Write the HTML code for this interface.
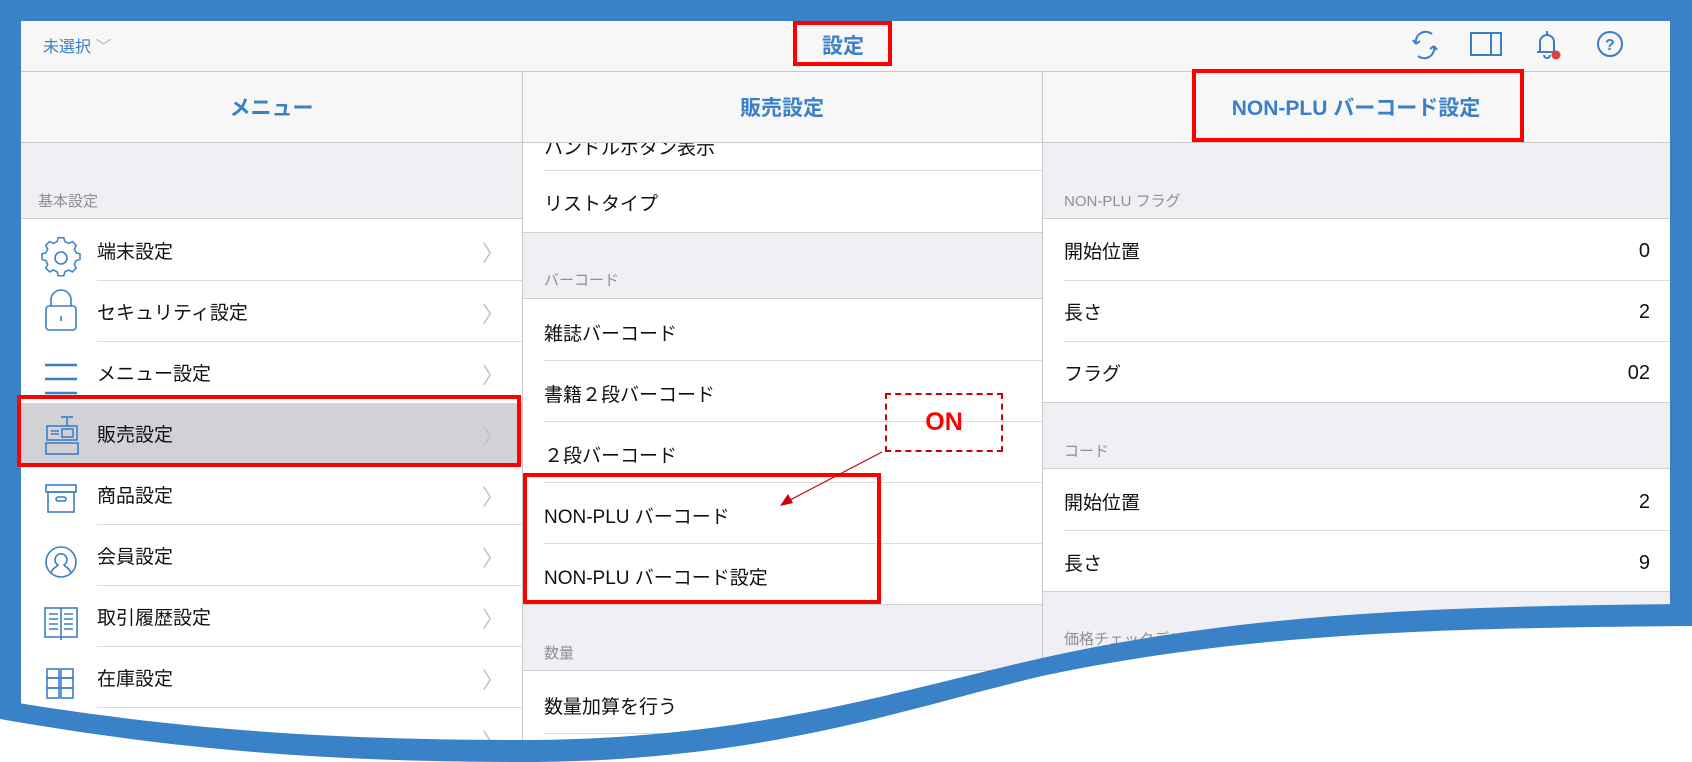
<!DOCTYPE html>
<html><head><meta charset="utf-8"><style>
*{margin:0;padding:0;box-sizing:border-box}
body{width:1692px;height:762px;overflow:hidden;background:#3a82c8;font-family:"Liberation Sans","Noto Sans CJK JP",sans-serif;position:relative}
.panel{position:absolute;left:21px;top:21px;width:1649px;height:741px;background:#fff;overflow:hidden}
.w{position:absolute;left:-21px;top:-21px;width:1692px;height:762px}
.abs{position:absolute}
.hdr{top:72px;height:71px;background:#f7f7f7;border-bottom:1px solid #c8c8c8;color:#3a7fc8;font-weight:bold;font-size:21px;display:flex;align-items:center;justify-content:center}
.gray{background:#efeff4}
.lbl{color:#8e8e93;font-size:15px}
.row{font-size:19px;color:#111}
.val{font-size:20px;color:#111;left:1500px;width:150px;text-align:right}
.ln{height:1px;background:#dcdcdc}
.chev{color:#c2c2c6;font-size:22px}
.red{position:absolute;border:4px solid #f00}
</style></head><body>
<div class="panel"><div class="w">
<div class="abs" style="left:0;top:0;width:1692px;height:72px;background:#f7f7f7;border-bottom:1px solid #c8c8c8"></div>
<div class="abs" style="left:43px;top:33px;color:#3a7fc8;font-size:16px">未選択 <span style="color:#a9b9cc">﹀</span></div>
<div class="abs" style="left:822px;top:30px;color:#3a7fc8;font-size:21px;font-weight:bold">設定</div>
<svg class="abs" style="left:1405px;top:28px" width="240" height="32" fill="none" stroke="#3a7fc8" stroke-width="2">
<path d="M27 6a10 10 0 0 0-16 10M13 28a10 10 0 0 0 16-10M11 16l-3-4M11 16l4-3M29 18l3 4M29 18l-4 3"/>
<rect x="66" y="5" width="30" height="22"/><line x1="86" y1="5" x2="86" y2="27"/>
<path d="M135 24v-10a7 7 0 0 1 14 0v10h3h-20zM142 3v4M139 27a3 3 0 0 0 6 0"/>
<circle cx="151" cy="27" r="4.5" fill="#e0403a" stroke="none"/>
<circle cx="205" cy="16" r="12"/><text x="200" y="22" font-size="16" font-weight="bold" fill="#3a7fc8" stroke="none" font-family="Liberation Sans">?</text>
</svg>

<div class="abs row" style="left:544px;top:133px">ハンドルボタン表示</div>
<div class="abs ln" style="left:544px;top:170px;width:498px"></div>
<div class="abs row" style="left:544px;top:189px">リストタイプ</div>
<div class="abs gray" style="left:522px;top:232px;width:520px;height:67px;border-top:1px solid #d0d0d0;border-bottom:1px solid #d0d0d0"></div>
<div class="abs lbl" style="left:544px;top:269px">バーコード</div>
<div class="abs row" style="left:544px;top:319px">雑誌バーコード</div>
<div class="abs ln" style="left:544px;top:360px;width:498px"></div>
<div class="abs row" style="left:544px;top:380px">書籍２段バーコード</div>
<div class="abs ln" style="left:544px;top:421px;width:498px"></div>
<div class="abs row" style="left:544px;top:441px">２段バーコード</div>
<div class="abs ln" style="left:544px;top:482px;width:498px"></div>
<div class="abs row" style="left:544px;top:502px">NON-PLU バーコード</div>
<div class="abs ln" style="left:544px;top:543px;width:498px"></div>
<div class="abs row" style="left:544px;top:563px">NON-PLU バーコード設定</div>
<div class="abs gray" style="left:522px;top:604px;width:520px;height:67px;border-top:1px solid #d0d0d0;border-bottom:1px solid #d0d0d0"></div>
<div class="abs lbl" style="left:544px;top:642px">数量</div>
<div class="abs row" style="left:544px;top:692px">数量加算を行う</div>
<div class="abs ln" style="left:544px;top:733px;width:498px"></div>

<div class="abs hdr" style="left:21px;width:501px">メニュー</div>
<div class="abs hdr" style="left:522px;width:520px">販売設定</div>
<div class="abs hdr" style="left:1042px;width:650px;padding-right:22px">NON-PLU バーコード設定</div>

<div class="abs gray" style="left:0;top:143px;width:522px;height:76px;border-bottom:1px solid #d0d0d0"></div>
<div class="abs lbl" style="left:38px;top:190px">基本設定</div>
<div class="abs" style="left:21px;top:403px;width:501px;height:61px;background:#d1d1d6"></div>
<svg class="abs" style="left:39px;top:227px" width="44" height="560" fill="none" stroke="#3a7fc8" stroke-width="1.6">
<g transform="translate(22,31)"><circle r="6"/><path d="M-3 -14h6l1 4 4 2 4-2 4 4-2 4 2 4 4 1v6l-4 1-2 4 2 4-4 4-4-2-4 2-1 4h-6l-1-4-4-2-4 2-4-4 2-4-2-4-4-1v-6l4-1 2-4-2-4 4-4 4 2 4-2z" transform="translate(0,-7) scale(0.95)"/></g>
<g transform="translate(0,61)"><rect x="7" y="18" width="30" height="24" rx="3"/><path d="M12 18v-6a10 10 0 0 1 20 0v6"/><line x1="22" y1="28" x2="22" y2="33"/></g>
<g transform="translate(0,122)" stroke-width="2.5"><line x1="6" y1="16" x2="38" y2="16"/><line x1="6" y1="30" x2="38" y2="30"/><line x1="6" y1="44" x2="38" y2="44"/></g>
<g transform="translate(0,183)"><rect x="8" y="16" width="30" height="14"/><rect x="7" y="33" width="32" height="11"/><rect x="23" y="19" width="11" height="8"/><line x1="28" y1="8" x2="28" y2="16"/><line x1="22" y1="7" x2="34" y2="7"/><path d="M12 21h8M12 24h8"/></g>
<g transform="translate(0,244)"><rect x="7" y="14" width="30" height="7"/><rect x="9" y="21" width="26" height="20"/><rect x="17" y="26" width="10" height="4" rx="2"/></g>
<g transform="translate(0,305)"><circle cx="22" cy="30" r="15"/><path d="M12 41c2-6 6-6 7-8a6 6 0 1 1 6 0c1 2 5 2 7 8"/></g>
<g transform="translate(0,366)"><rect x="6" y="15" width="32" height="29"/><line x1="22" y1="15" x2="22" y2="47"/><path d="M10 21h9M10 26h9M10 31h9M10 36h9M25 21h9M25 26h9M25 31h9M25 36h9"/></g>
<g transform="translate(0,427)"><rect x="8" y="15" width="12" height="9"/><rect x="22" y="15" width="12" height="9"/><rect x="8" y="24" width="12" height="10"/><rect x="22" y="24" width="12" height="10"/><rect x="8" y="34" width="12" height="10"/><rect x="22" y="34" width="12" height="10"/></g>
</svg>
<div class="abs row" style="left:97px;top:237px">端末設定</div>
<div class="abs row" style="left:97px;top:298px">セキュリティ設定</div>
<div class="abs row" style="left:97px;top:359px">メニュー設定</div>
<div class="abs row" style="left:97px;top:420px">販売設定</div>
<div class="abs row" style="left:97px;top:481px">商品設定</div>
<div class="abs row" style="left:97px;top:542px">会員設定</div>
<div class="abs row" style="left:97px;top:603px">取引履歴設定</div>
<div class="abs row" style="left:97px;top:664px">在庫設定</div>
<div class="abs ln" style="left:97px;top:280px;width:425px"></div>
<div class="abs ln" style="left:97px;top:341px;width:425px"></div>
<div class="abs ln" style="left:97px;top:524px;width:425px"></div>
<div class="abs ln" style="left:97px;top:585px;width:425px"></div>
<div class="abs ln" style="left:97px;top:646px;width:425px"></div>
<div class="abs ln" style="left:97px;top:707px;width:425px"></div>
<div class="abs chev" style="left:482px;top:236px">〉</div>
<div class="abs chev" style="left:482px;top:297px">〉</div>
<div class="abs chev" style="left:482px;top:358px">〉</div>
<div class="abs chev" style="left:482px;top:419px">〉</div>
<div class="abs chev" style="left:482px;top:480px">〉</div>
<div class="abs chev" style="left:482px;top:541px">〉</div>
<div class="abs chev" style="left:482px;top:602px">〉</div>
<div class="abs chev" style="left:482px;top:663px">〉</div>
<div class="abs chev" style="left:482px;top:724px">〉</div>

<div class="abs" style="left:522px;top:72px;width:1px;height:700px;background:#c8c8c8"></div>
<div class="abs" style="left:1042px;top:72px;width:1px;height:700px;background:#c8c8c8"></div>

<div class="abs gray" style="left:1043px;top:143px;width:650px;height:76px;border-bottom:1px solid #d0d0d0"></div>
<div class="abs lbl" style="left:1064px;top:190px">NON-PLU フラグ</div>
<div class="abs row" style="left:1064px;top:237px">開始位置</div><div class="abs val" style="top:240px">0</div>
<div class="abs ln" style="left:1064px;top:280px;width:628px"></div>
<div class="abs row" style="left:1064px;top:298px">長さ</div><div class="abs val" style="top:301px">2</div>
<div class="abs ln" style="left:1064px;top:341px;width:628px"></div>
<div class="abs row" style="left:1064px;top:359px">フラグ</div><div class="abs val" style="top:362px">02</div>
<div class="abs gray" style="left:1043px;top:402px;width:650px;height:67px;border-top:1px solid #d0d0d0;border-bottom:1px solid #d0d0d0"></div>
<div class="abs lbl" style="left:1064px;top:440px">コード</div>
<div class="abs row" style="left:1064px;top:488px">開始位置</div><div class="abs val" style="top:491px">2</div>
<div class="abs ln" style="left:1064px;top:530px;width:628px"></div>
<div class="abs row" style="left:1064px;top:549px">長さ</div><div class="abs val" style="top:552px">9</div>
<div class="abs gray" style="left:1043px;top:591px;width:650px;height:90px;border-top:1px solid #d0d0d0"></div>
<div class="abs lbl" style="left:1064px;top:628px">価格チェックデジット</div>
</div></div>

<div class="red" style="left:793px;top:21px;width:99px;height:45px"></div>
<div class="red" style="left:1192px;top:69px;width:332px;height:73px"></div>
<div class="red" style="left:17px;top:395px;width:504px;height:72px"></div>
<div class="red" style="left:523px;top:473px;width:358px;height:131px"></div>
<div class="abs" style="left:885px;top:393px;width:118px;height:59px;border:2px dashed #c00;color:#f00;font-size:25px;font-weight:bold;display:flex;align-items:center;justify-content:center">ON</div>
<svg class="abs" style="left:0;top:0" width="1692" height="762">
<line x1="882" y1="452" x2="790" y2="500" stroke="#c00" stroke-width="1.2"/>
<path d="M780 506l8-12 5 9z" fill="#c00"/>
<path d="M0 700 C150 725 300 740 520 740 C750 740 900 690 1042 658 C1250 612 1450 606 1692 604 L1692 762 L0 762Z" fill="#3a82c8"/>
<path d="M0 719 C150 745 300 762 520 762 C760 762 900 710 1042 676 C1250 632 1450 628 1692 626 L1692 762 L0 762Z" fill="#fff"/>
</svg>
</body></html>
